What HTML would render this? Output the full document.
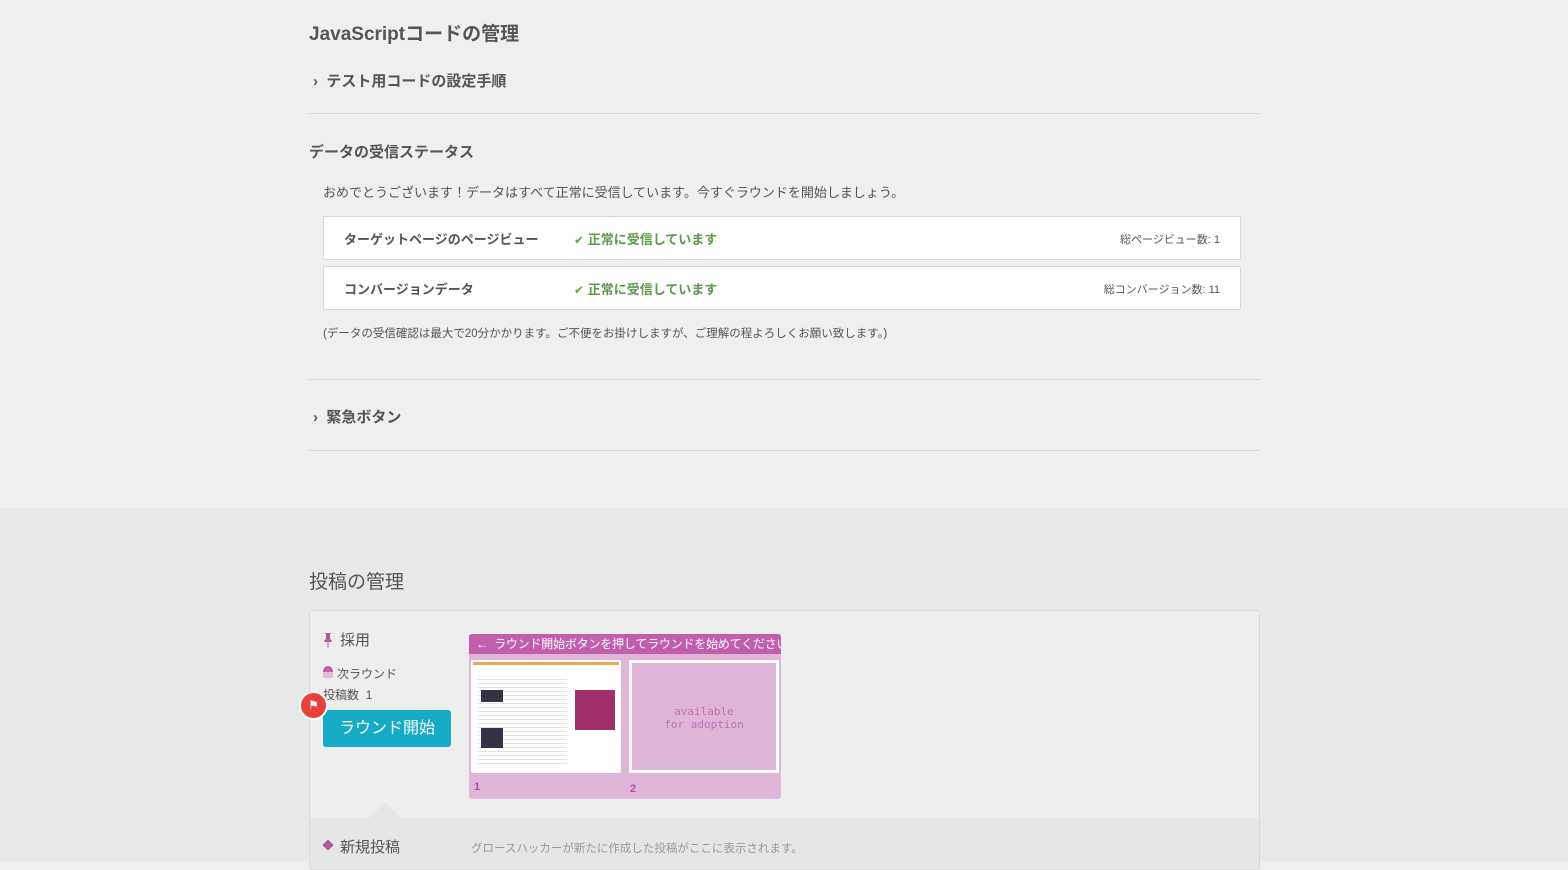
<!DOCTYPE html>
<html><head><meta charset="utf-8"><style>
*{margin:0;padding:0;box-sizing:border-box}
body{width:1568px;height:861px;overflow:hidden;background:#efefef;font-family:"Liberation Sans","Noto Sans CJK JP",sans-serif;color:#555;position:relative}
.a{position:absolute}
.hr{position:absolute;left:309px;width:951px;height:1px;background:#d6d6d6}
.b{font-weight:bold}
.row{position:absolute;left:323px;width:918px;height:44px;background:#fff;border:1px solid #d8d8d8;border-radius:2px;font-size:13px}
.row>span{position:absolute;top:12px;white-space:nowrap}
.g{color:#5a9a4a;font-weight:bold}
.chk{color:#7a9a40;font-size:12px}
</style></head><body>
<div class="a b" style="left:309px;top:19px;font-size:19px;color:#555">JavaScriptコードの管理</div>
<div class="a b" style="left:313px;top:70px;font-size:15px;color:#555">›&nbsp; テスト用コードの設定手順</div>
<div class="hr" style="top:113px"></div>
<div class="a b" style="left:309px;top:141px;font-size:15px">データの受信ステータス</div>
<div class="a" style="left:323px;top:182px;font-size:13px">おめでとうございます！データはすべて正常に受信しています。今すぐラウンドを開始しましょう。</div>
<div class="row" style="top:216px"><span class="b" style="left:20px">ターゲットページのページビュー</span><span style="left:250px"><span class="chk">✔</span> <span class="g">正常に受信しています</span></span><span style="right:20px;font-size:11px;top:14px">総ページビュー数: 1</span></div>
<div class="row" style="top:266px"><span class="b" style="left:20px">コンバージョンデータ</span><span style="left:250px"><span class="chk">✔</span> <span class="g">正常に受信しています</span></span><span style="right:20px;font-size:11px;top:14px">総コンバージョン数: 11</span></div>
<div class="a" style="left:323px;top:325px;font-size:11.5px">(データの受信確認は最大で20分かかります。ご不便をお掛けしますが、ご理解の程よろしくお願い致します。)</div>
<div class="hr" style="top:379px"></div>
<div class="a b" style="left:313px;top:406px;font-size:15px">›&nbsp; 緊急ボタン</div>
<div class="hr" style="top:450px"></div>
<div class="a" style="left:0;top:508px;width:1568px;height:353px;background:#e8e8e8"></div>
<div class="a" style="left:309px;top:567px;font-size:19px;color:#555">投稿の管理</div>
<div class="a" style="left:309px;top:610px;width:951px;height:260px;background:#eeeeee;border:1px solid #d8d8d8;border-radius:3px"></div>
<div class="a" style="left:310px;top:818px;width:949px;height:50px;background:#e6e6e6"></div>
<div class="a" style="left:369px;top:802px;width:0;height:0;border-left:16px solid transparent;border-right:16px solid transparent;border-bottom:16px solid #e6e6e6"></div>
<svg class="a" style="left:322px;top:632px" width="12" height="16" viewBox="0 0 12 16"><path d="M3 1h6v1H8v5l2 2v1H2V9l2-2V2H3z M5.5 10h1v6h-1z" fill="#b55aa5"/></svg>
<div class="a" style="left:340px;top:629px;font-size:15px">採用</div>
<div class="a" style="left:323px;top:666px;width:10px;height:12px;border-radius:5px 5px 2px 2px;background:linear-gradient(#c060b0 50%,#e8b8e0 50%)"></div>
<div class="a" style="left:337px;top:665px;font-size:12px">次ラウンド</div>
<div class="a" style="left:323px;top:686px;font-size:12px">投稿数 &nbsp;1</div>
<div class="a" style="left:323px;top:710px;width:128px;height:37px;background:#15aac6;border-radius:3px;color:#fff;font-size:16px;text-align:center;line-height:37px">ラウンド開始</div>
<div class="a" style="left:299px;top:691px;width:29px;height:29px;border-radius:50%;background:#e8403a;border:2px solid #fff;color:#fff;font-size:12px;text-align:center;line-height:25px">⚑</div>
<div class="a" style="left:469px;top:634px;width:312px;height:165px;background:#e0b6d8;border-radius:3px"></div>
<div class="a" style="left:469px;top:634px;width:312px;height:20px;background:#c15fae;border-radius:3px 3px 0 0;color:#fff;font-size:12px;line-height:20px;padding-left:7px;white-space:nowrap;overflow:hidden;letter-spacing:-0.2px">← &nbsp;ラウンド開始ボタンを押してラウンドを始めてください</div>
<div class="a" style="left:471px;top:660px;width:150px;height:113px;background:#fff;border-radius:2px">
<div class="a" style="left:2px;top:2px;width:146px;height:3px;background:#f0a850"></div>
<div class="a" style="left:6px;top:16px;width:90px;height:90px;background:repeating-linear-gradient(#fff 0 3px,#e4e4e4 3px 4px)"></div>
<div class="a" style="left:10px;top:30px;width:22px;height:12px;background:#334"></div>
<div class="a" style="left:10px;top:68px;width:22px;height:20px;background:#334"></div>
<div class="a" style="left:104px;top:30px;width:40px;height:40px;background:#a0306a"></div>
</div>
<div class="a" style="left:629px;top:660px;width:150px;height:113px;background:#e0b6d8;border:3px solid #fff;border-radius:2px;color:#c070b5;font-size:11px;text-align:center;padding-top:42px;font-family:'DejaVu Sans Mono',monospace">available<br>for adoption</div>
<div class="a b" style="left:474px;top:781px;font-size:11px;color:#b04ea0">1</div>
<div class="a b" style="left:630px;top:783px;font-size:11px;color:#b04ea0">2</div>
<div class="a" style="left:323px;top:840px;width:10px;height:10px;background:#b05aa5;transform:rotate(45deg) scale(.8)"></div>
<div class="a" style="left:340px;top:836px;font-size:15px">新規投稿</div>
<div class="a" style="left:471px;top:840px;font-size:11.5px;color:#999">グロースハッカーが新たに作成した投稿がここに表示されます。</div>
</body></html>
